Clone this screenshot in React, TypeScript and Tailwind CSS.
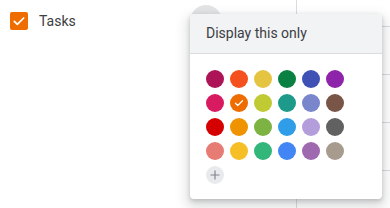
import { Plus } from "lucide-react";

const swatches = [
  "#ad1457", "#f4511e", "#e4c441", "#0b8043", "#3f51b5", "#8e24aa",
  "#d81b60", "#ef6c00", "#c0ca33", "#1e9a8a", "#7986cb", "#795548",
  "#d50000", "#f09300", "#7cb342", "#2f9de8", "#b39ddb", "#616161",
  "#e67c73", "#f6bf26", "#33b679", "#4285f4", "#9e69af", "#a79b8e",
];

const Check = ({ size, w }: { size: number; w: number }) => (
  <svg width={size} height={size} viewBox="0 0 24 24" fill="none">
    <path d="M5 12.5l4.5 4.5L19 7.5" stroke="#fff" strokeWidth={w} strokeLinecap="round" strokeLinejoin="round" />
  </svg>
);

export default function App() {
  return (
    <div className="relative w-[390px] h-[208px] overflow-hidden bg-white flex font-['Roboto',sans-serif] text-[#3c4043]">
      <div className="w-[296px] shrink-0">
        <div className="flex items-center w-[222px] pl-[10px] pt-[5px] h-[37px]">
          <div className="w-[18px] h-[18px] rounded-[2px] bg-[#ef6c00] flex items-center justify-center">
            <Check size={16} w={2.6} />
          </div>
          <span className="ml-[11px] text-[14px]">Tasks</span>
          <div className="ml-auto w-8 h-8 rounded-full bg-[#e3e4e6]" />
        </div>
      </div>
      <div className="flex-1 border-l border-[#dadce0]">
        <div className="h-[27px] border-b border-[#dadce0]" />
        <div className="h-[48px] border-b border-[#dadce0]" />
        <div className="h-[48px] border-b border-[#dadce0]" />
        <div className="h-[48px] border-b border-[#dadce0]" />
      </div>

      <div className="absolute left-[190px] top-[14px] w-[192px] h-[185px] bg-white rounded-[4px] overflow-hidden shadow-[0_2px_4px_0_rgba(60,64,67,0.25),0_6px_12px_4px_rgba(60,64,67,0.15)]">
        <div className="h-[40px] bg-[#f1f3f4] border-b border-[#dadce0] px-4 flex items-center text-[14px]">
          Display this only
        </div>
        <div className="pl-4 pt-4 grid grid-cols-[repeat(6,18px)] gap-[6px]">
          {swatches.map((c) => (
            <div key={c} className="w-[18px] h-[18px] rounded-full flex items-center justify-center" style={{ backgroundColor: c }}>
              {c === "#ef6c00" && <Check size={12} w={2.6} />}
            </div>
          ))}
          <div className="w-[18px] h-[18px] rounded-full bg-[#e8eaed] flex items-center justify-center">
            <Plus size={14} strokeWidth={2} color="#80868b" />
          </div>
        </div>
      </div>
    </div>
  );
}
